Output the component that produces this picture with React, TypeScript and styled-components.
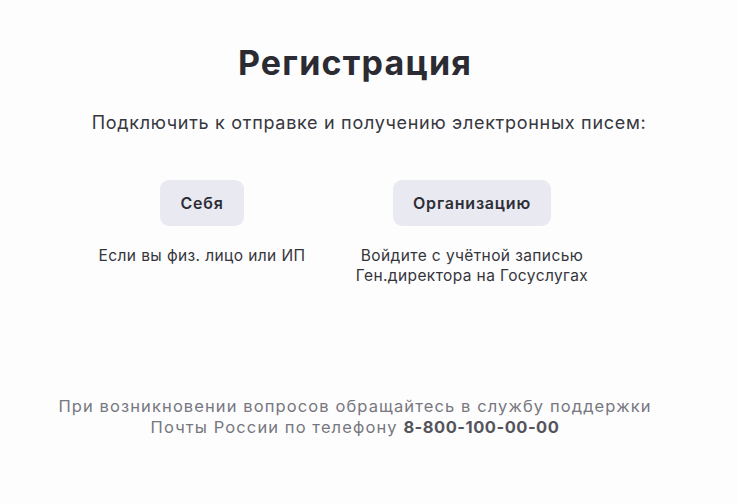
import { createGlobalStyle } from 'styled-components'
import styled from 'styled-components'

const GlobalStyle = createGlobalStyle`
  html, body {
    margin: 0;
    padding: 0;
    background: #fdfdfd;
  }
  body {
    font-family: Inter, "Noto Sans", "Liberation Sans", sans-serif;
    color: #2b2b33;
  }
`

const Page = styled.div`
  width: 738px;
  height: 504px;
  display: flex;
  flex-direction: column;
  align-items: center;
  padding-top: 41px;
  box-sizing: border-box;
`

const Title = styled.h1`
  margin: 0 28px 0 0;
  text-align: center;
  font-size: 34px;
  line-height: 44px;
  font-weight: 700;
  letter-spacing: 1.2px;
  color: #2b2b33;
`

const Subtitle = styled.p`
  margin: 26px 0 0;
  font-size: 18px;
  line-height: 24px;
  letter-spacing: 0.7px;
  color: #37373e;
`

const Options = styled.div`
  margin-top: 45px;
  align-self: flex-start;
  margin-left: 82px;
  display: grid;
  grid-template-columns: 240px 240px;
  column-gap: 30px;
`

const Option = styled.div`
  display: flex;
  flex-direction: column;
  align-items: center;
`

const ChoiceButton = styled.button`
  height: 46px;
  padding: 0 20px;
  border: none;
  border-radius: 9px;
  background: #e9e9f2;
  font-family: inherit;
  font-size: 16px;
  font-weight: 600;
  letter-spacing: 0.8px;
  color: #2e2e36;
  cursor: pointer;
`

const Hint = styled.p`
  margin: 20px 0 0;
  text-align: center;
  font-size: 15.5px;
  line-height: 20px;
  letter-spacing: 0.4px;
  color: #35353c;
  white-space: nowrap;
`

const Footer = styled.p`
  margin: 110px 28px 0 0;
  text-align: center;
  font-size: 16.5px;
  line-height: 21px;
  letter-spacing: 1.1px;
  color: #77777f;
  white-space: nowrap;

  b {
    font-weight: 700;
    letter-spacing: 0.5px;
    color: #55555d;
  }
`

export default function App() {
  return (
    <>
      <GlobalStyle />
      <Page>
        <Title>Регистрация</Title>
        <Subtitle>Подключить к отправке и получению электронных писем:</Subtitle>
        <Options>
          <Option>
            <ChoiceButton>Себя</ChoiceButton>
            <Hint>Если вы физ. лицо или ИП</Hint>
          </Option>
          <Option>
            <ChoiceButton>Организацию</ChoiceButton>
            <Hint>
              Войдите с учётной записью
              <br />
              Ген.директора на Госуслугах
            </Hint>
          </Option>
        </Options>
        <Footer>
          При возникновении вопросов обращайтесь в службу поддержки
          <br />
          Почты России по телефону <b>8-800-100-00-00</b>
        </Footer>
      </Page>
    </>
  )
}
